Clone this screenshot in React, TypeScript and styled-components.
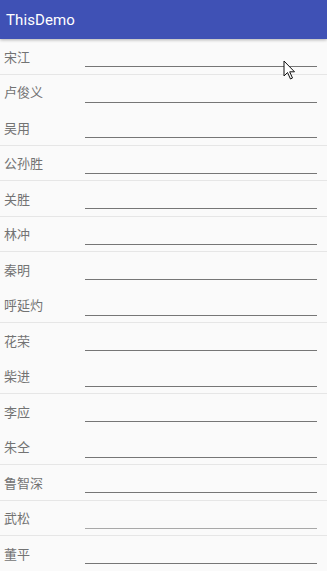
import styled, { createGlobalStyle } from 'styled-components';
import * as React from 'react';

const GlobalStyle = createGlobalStyle`
	html, body {
		margin: 0;
		padding: 0;
		background: #fafafa;
	}
	body {
		font-family: Roboto, 'Noto Sans CJK SC', sans-serif;
		overflow: hidden;
	}
`;

interface Hero {
	name: string;
	divider?: boolean;
	faint?: boolean;
}

const heroes: Hero[] = [
	{ name: '宋江', divider: true },
	{ name: '卢俊义', divider: false },
	{ name: '吴用', divider: true },
	{ name: '公孙胜', divider: true },
	{ name: '关胜', divider: true },
	{ name: '林冲', divider: true },
	{ name: '秦明', divider: false },
	{ name: '呼延灼', divider: true },
	{ name: '花荣', divider: false },
	{ name: '柴进', divider: true },
	{ name: '李应', divider: false },
	{ name: '朱仝', divider: true },
	{ name: '鲁智深', divider: true },
	{ name: '武松', divider: true, faint: true },
	{ name: '董平', divider: true },
];

const Screen = styled.div`
	position: relative;
	width: 327px;
	height: 571px;
	background: #fafafa;
	display: flex;
	flex-direction: column;
	overflow: hidden;
`;

const AppBar = styled.header`
	height: 39px;
	flex: 0 0 auto;
	background: #3f51b5;
	display: flex;
	align-items: center;
	padding-left: 6px;
	box-shadow: 0 1px 3px rgba(0, 0, 0, 0.3);
	position: relative;
	z-index: 1;
`;

const Title = styled.h1`
	margin: 0;
	font-family: Roboto, sans-serif;
	font-weight: 400;
	font-size: 15px;
	color: #ffffff;
	letter-spacing: 0.1px;
`;

const List = styled.div`
	display: flex;
	flex-direction: column;
`;

const Row = styled.div<{ $divider: boolean }>`
	height: 35.5px;
	flex: 0 0 auto;
	box-sizing: border-box;
	display: flex;
	align-items: stretch;
	border-bottom: 1px solid ${(p) => (p.$divider ? '#e6e6e6' : 'transparent')};
`;

const Label = styled.span`
	width: 85px;
	flex: 0 0 auto;
	padding-left: 4px;
	box-sizing: border-box;
	align-self: center;
	font-family: 'Noto Sans CJK SC', sans-serif;
	font-size: 13px;
	color: #737373;
	line-height: 1;
`;

const Field = styled.div<{ $faint: boolean }>`
	flex: 1;
	margin-right: 10px;
	height: 28px;
	box-sizing: border-box;
	align-self: flex-start;
	border-bottom: 1px solid ${(p) => (p.$faint ? '#a8a8a8' : '#767676')};
`;

const Cursor = styled.svg`
	position: absolute;
	left: 283px;
	top: 60px;
	width: 14px;
	height: 20px;
	z-index: 2;
`;

export default function App() {
	return (
		<>
			<GlobalStyle />
			<Screen>
				<AppBar>
					<Title>ThisDemo</Title>
				</AppBar>
				<List>
					{heroes.map((h) => (
						<Row key={h.name} $divider={!!h.divider}>
							<Label>{h.name}</Label>
							<Field $faint={!!h.faint} />
						</Row>
					))}
				</List>
				<Cursor viewBox="0 0 14 20">
					<path
						d="M1 1 L1 16 L4.5 12.5 L7.5 19 L9.5 18 L6.7 11.8 L11.5 11.8 Z"
						fill="#ffffff"
						stroke="#111111"
						strokeWidth="1"
						strokeLinejoin="round"
					/>
				</Cursor>
			</Screen>
		</>
	);
}
